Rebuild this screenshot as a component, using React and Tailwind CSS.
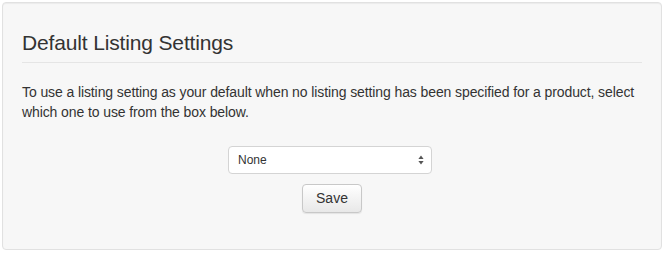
import React from "react";

export default function App() {
    return (
        <div className="w-[665px] h-[256px] bg-white p-[2px] font-['Helvetica_Neue','Liberation_Sans',Arial,sans-serif] text-[#333]">
            {/* WELL PANEL */}
            <div className="w-[660px] h-[248px] bg-[#f7f7f7] border border-[#e1e1e1] rounded-[4px] shadow-[inset_0_1px_1px_rgba(0,0,0,0.05)] px-[19px] pt-[28px]">
                <h3 className="text-[21px] leading-[23px] font-normal tracking-[-0.15px] pb-[8px] border-b border-[#e5e5e5]">
                    Default Listing Settings
                </h3>

                <p className="mt-[19px] text-[14px] leading-[20px] tracking-[-0.1px]">
                    To use a listing setting as your default when no listing setting has been specified for a product, select
                    which one to use from the box below.
                </p>

                <div className="mt-[24px] flex flex-col items-center">
                    <div className="w-[204px] h-[28px] ml-[-4px] bg-white border border-[#d4d4d4] rounded-[4px] flex items-center justify-between pl-[9px] pr-[7px]">
                        <span className="text-[12px] text-[#333]">None</span>
                        <svg width="6" height="10" viewBox="0 0 6 10">
                            <path d="M3 0.5 L5.6 4 H0.4 Z" fill="#555" />
                            <path d="M3 9.5 L5.6 6 H0.4 Z" fill="#555" />
                        </svg>
                    </div>

                    <button className="mt-[10px] w-[60px] h-[29px] rounded-[4px] border border-[#c8c8c8] bg-gradient-to-b from-white to-[#e8e8e8] shadow-[0_1px_1px_rgba(0,0,0,0.08)] text-[14px] text-[#333]">
                        Save
                    </button>
                </div>
            </div>
        </div>
    );
}
